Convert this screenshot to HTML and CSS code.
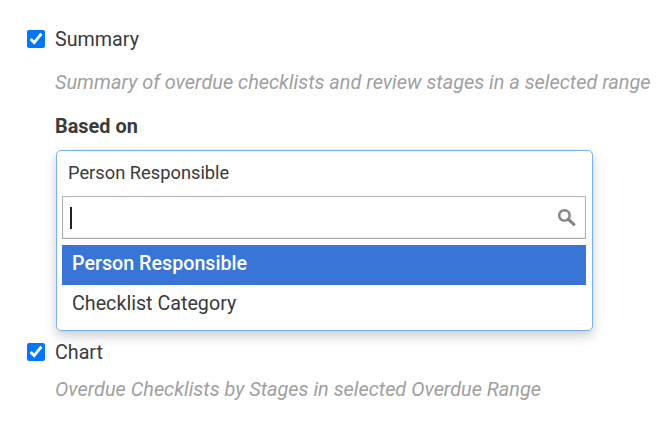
FILE: index.html
```html
<!DOCTYPE html>
<html lang="en">
<head>
  <meta charset="UTF-8">
  <meta name="viewport" content="width=device-width, initial-scale=1.0">
  <title>Report options</title>
  <link rel="stylesheet" href="styles.css">
</head>
<body>
  <div class="container">
    <label class="check-row">
      <input type="checkbox" checked>
      <span>Summary</span>
    </label>
    <p class="hint">Summary of overdue checklists and review stages in a selected range</p>
    <div class="field-label">Based on</div>

    <div class="select-box">
      <div class="select-value">Person Responsible</div>
      <div class="search-box">
        <span class="caret"></span>
        <svg class="search-icon" width="19" height="19" viewBox="0 0 19 19">
          <circle cx="7.4" cy="7.4" r="5.2" fill="none" stroke="#858585" stroke-width="2.4"/>
          <path d="M11.2 11.2l5.6 5.2" fill="none" stroke="#858585" stroke-width="3.2" stroke-linecap="round"/>
        </svg>
      </div>
      <div class="option active">Person Responsible</div>
      <div class="option">Checklist Category</div>
    </div>

    <label class="check-row chart-row">
      <input type="checkbox" checked>
      <span>Chart</span>
    </label>
    <p class="hint chart-hint">Overdue Checklists by Stages in selected Overdue Range</p>
  </div>
</body>
</html>
```

FILE: styles.css
```css
body {
  font-family: Roboto, Arial, sans-serif;
  background-color: #ffffff;
  color: #3a3a3a;
  margin: 0;
  padding: 0;
}

.container {
  padding: 28px 0 0 27px;
}

.check-row {
  display: flex;
  align-items: center;
  gap: 10px;
  height: 22px;
  font-size: 19.7px;
}

.check-row span {
  padding-top: 1px;
}

.check-row input {
  width: 18px;
  height: 18px;
  margin: 0;
}

.hint {
  margin: 21px 0 0 28px;
  font-size: 19.9px;
  line-height: 24px;
  font-style: italic;
  color: #a0a0a0;
  white-space: nowrap;
}

.field-label {
  margin: 20px 0 0 28px;
  font-size: 19.9px;
  line-height: 24px;
  font-weight: 700;
}

.select-box {
  width: 537px;
  height: 181px;
  margin: 11px 0 0 29px;
  padding: 0 6px 0 5px;
  box-sizing: border-box;
  background-color: #ffffff;
  border: 1.5px solid #78b0f2;
  border-radius: 5px;
  box-shadow: 0 5px 12px rgba(0, 0, 0, 0.2);
}

.select-value {
  height: 45px;
  padding-left: 6px;
  font-size: 18.3px;
  line-height: 44px;
}

.search-box {
  display: flex;
  align-items: center;
  justify-content: space-between;
  height: 43px;
  padding: 0 9px 0 7px;
  box-sizing: border-box;
  border: 1.5px solid #b0b0b0;
  box-shadow: inset 0 -1px 2px rgba(0, 0, 0, 0.1);
}

.caret {
  width: 1.5px;
  height: 22px;
  background-color: #222222;
}

.option {
  height: 39.5px;
  padding-left: 10px;
  font-size: 19.7px;
  line-height: 38px;
}

.option.active {
  margin-top: 6px;
  background-color: #3875d7;
  color: #ffffff;
  font-weight: 500;
}

.chart-row {
  margin-top: 10px;
}

.chart-hint {
  margin-top: 15px;
}
```
